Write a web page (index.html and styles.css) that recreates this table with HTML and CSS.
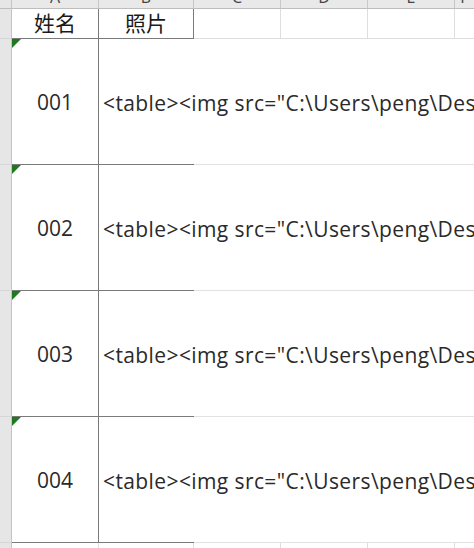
FILE: index.html
```html
<!DOCTYPE html>
<html>
<head>
<meta charset="utf-8">
<link rel="stylesheet" href="styles.css">
</head>
<body>
<div class="sheet">
  <div class="row colhead">
    <div class="rh"></div>
    <div class="c ca">A</div>
    <div class="c cb">B</div>
    <div class="c cc">C</div>
    <div class="c cd">D</div>
    <div class="c ce">E</div>
    <div class="c cf">F</div>
  </div>
  <div class="row r1">
    <div class="rh"></div>
    <div class="c ca dark">姓名</div>
    <div class="c cb dark">照片</div>
    <div class="c cc"></div>
    <div class="c cd"></div>
    <div class="c ce"></div>
    <div class="c cf"></div>
  </div>
  <div class="row data">
    <div class="rh"></div>
    <div class="c ca dark num"><span class="flag"></span>001</div>
    <div class="c cb darkb src">&lt;table&gt;&lt;img src="C:\Users\peng\Desktop\照片\001.jpg" width="90" height="120"&gt;&lt;/table&gt;</div>
    <div class="c rest"></div>
  </div>
  <div class="row data">
    <div class="rh"></div>
    <div class="c ca dark num"><span class="flag"></span>002</div>
    <div class="c cb darkb src">&lt;table&gt;&lt;img src="C:\Users\peng\Desktop\照片\002.jpg" width="90" height="120"&gt;&lt;/table&gt;</div>
    <div class="c rest"></div>
  </div>
  <div class="row data">
    <div class="rh"></div>
    <div class="c ca dark num"><span class="flag"></span>003</div>
    <div class="c cb darkb src">&lt;table&gt;&lt;img src="C:\Users\peng\Desktop\照片\003.jpg" width="90" height="120"&gt;&lt;/table&gt;</div>
    <div class="c rest"></div>
  </div>
  <div class="row data">
    <div class="rh"></div>
    <div class="c ca dark num"><span class="flag"></span>004</div>
    <div class="c cb darkb src">&lt;table&gt;&lt;img src="C:\Users\peng\Desktop\照片\004.jpg" width="90" height="120"&gt;&lt;/table&gt;</div>
    <div class="c rest"></div>
  </div>
  <div class="row empty">
    <div class="rh"></div>
    <div class="c ca"></div>
    <div class="c cb"></div>
    <div class="c cc"></div>
    <div class="c cd"></div>
    <div class="c ce"></div>
    <div class="c cf"></div>
  </div>
</div>
</body>
</html>
```

FILE: styles.css
```css
* { box-sizing: border-box; }
html, body {
  margin: 0;
  padding: 0;
  background: #ffffff;
  overflow: hidden;
  width: 474px;
  height: 548px;
}
.sheet {
  font-family: "Open Sans", "Noto Sans CJK SC", sans-serif;
  color: #222222;
  display: flex;
  flex-direction: column;
  width: 474px;
}
.row {
  display: flex;
  flex: none;
}
.rh {
  width: 12px;
  flex: none;
  background: #e6e6e6;
  border-right: 1px solid #c4c4c4;
  border-bottom: 1px solid #d6d6d6;
}
.c {
  flex: none;
  border-right: 1px solid #dedede;
  border-bottom: 1px solid #dedede;
  position: relative;
}
.ca { width: 87px; }
.cb { width: 95px; }
.cc { width: 87px; }
.cd { width: 87px; }
.ce { width: 87px; }
.cf { flex: 1; border-right: none; }
.rest { flex: 1; border-right: none; }

.colhead {
  height: 22px;
  margin-top: -13px;
}
.colhead .c {
  background: #e9e9e9;
  border-right-color: #c8c8c8;
  border-bottom-color: #bdbdbd;
  display: flex;
  justify-content: center;
  align-items: flex-end;
  font-size: 16px;
  line-height: 16px;
  padding-bottom: 3px;
  color: #444444;
}
.colhead .rh { border-bottom-color: #bdbdbd; }

.r1 { height: 30px; }
.r1 .c {
  font-size: 21px;
  display: flex;
  align-items: center;
  justify-content: center;
  line-height: 1;
  color: #1a1a1a;
  padding-bottom: 1px;
}
.c.dark {
  border-right: 1px solid #7a7a7a;
  border-bottom: 1px solid #7a7a7a;
}
.c.darkb {
  border-right: none;
  border-bottom: 1px solid #7a7a7a;
}

.data { height: 126px; }
.num {
  display: flex;
  align-items: center;
  justify-content: center;
  font-size: 21px;
  color: #2a2a2a;
}
.src {
  display: flex;
  align-items: center;
  padding-left: 4px;
  white-space: nowrap;
  overflow: visible;
  font-size: 21px;
  letter-spacing: 0.4px;
  color: #2a2a2a;
}
.rest {
  border-bottom: 1px solid #e2e2e2;
}
.flag {
  position: absolute;
  left: 0;
  top: 0;
  width: 0;
  height: 0;
  border-top: 9px solid #1f7a1f;
  border-right: 9px solid transparent;
}
.empty { height: 40px; }
```
